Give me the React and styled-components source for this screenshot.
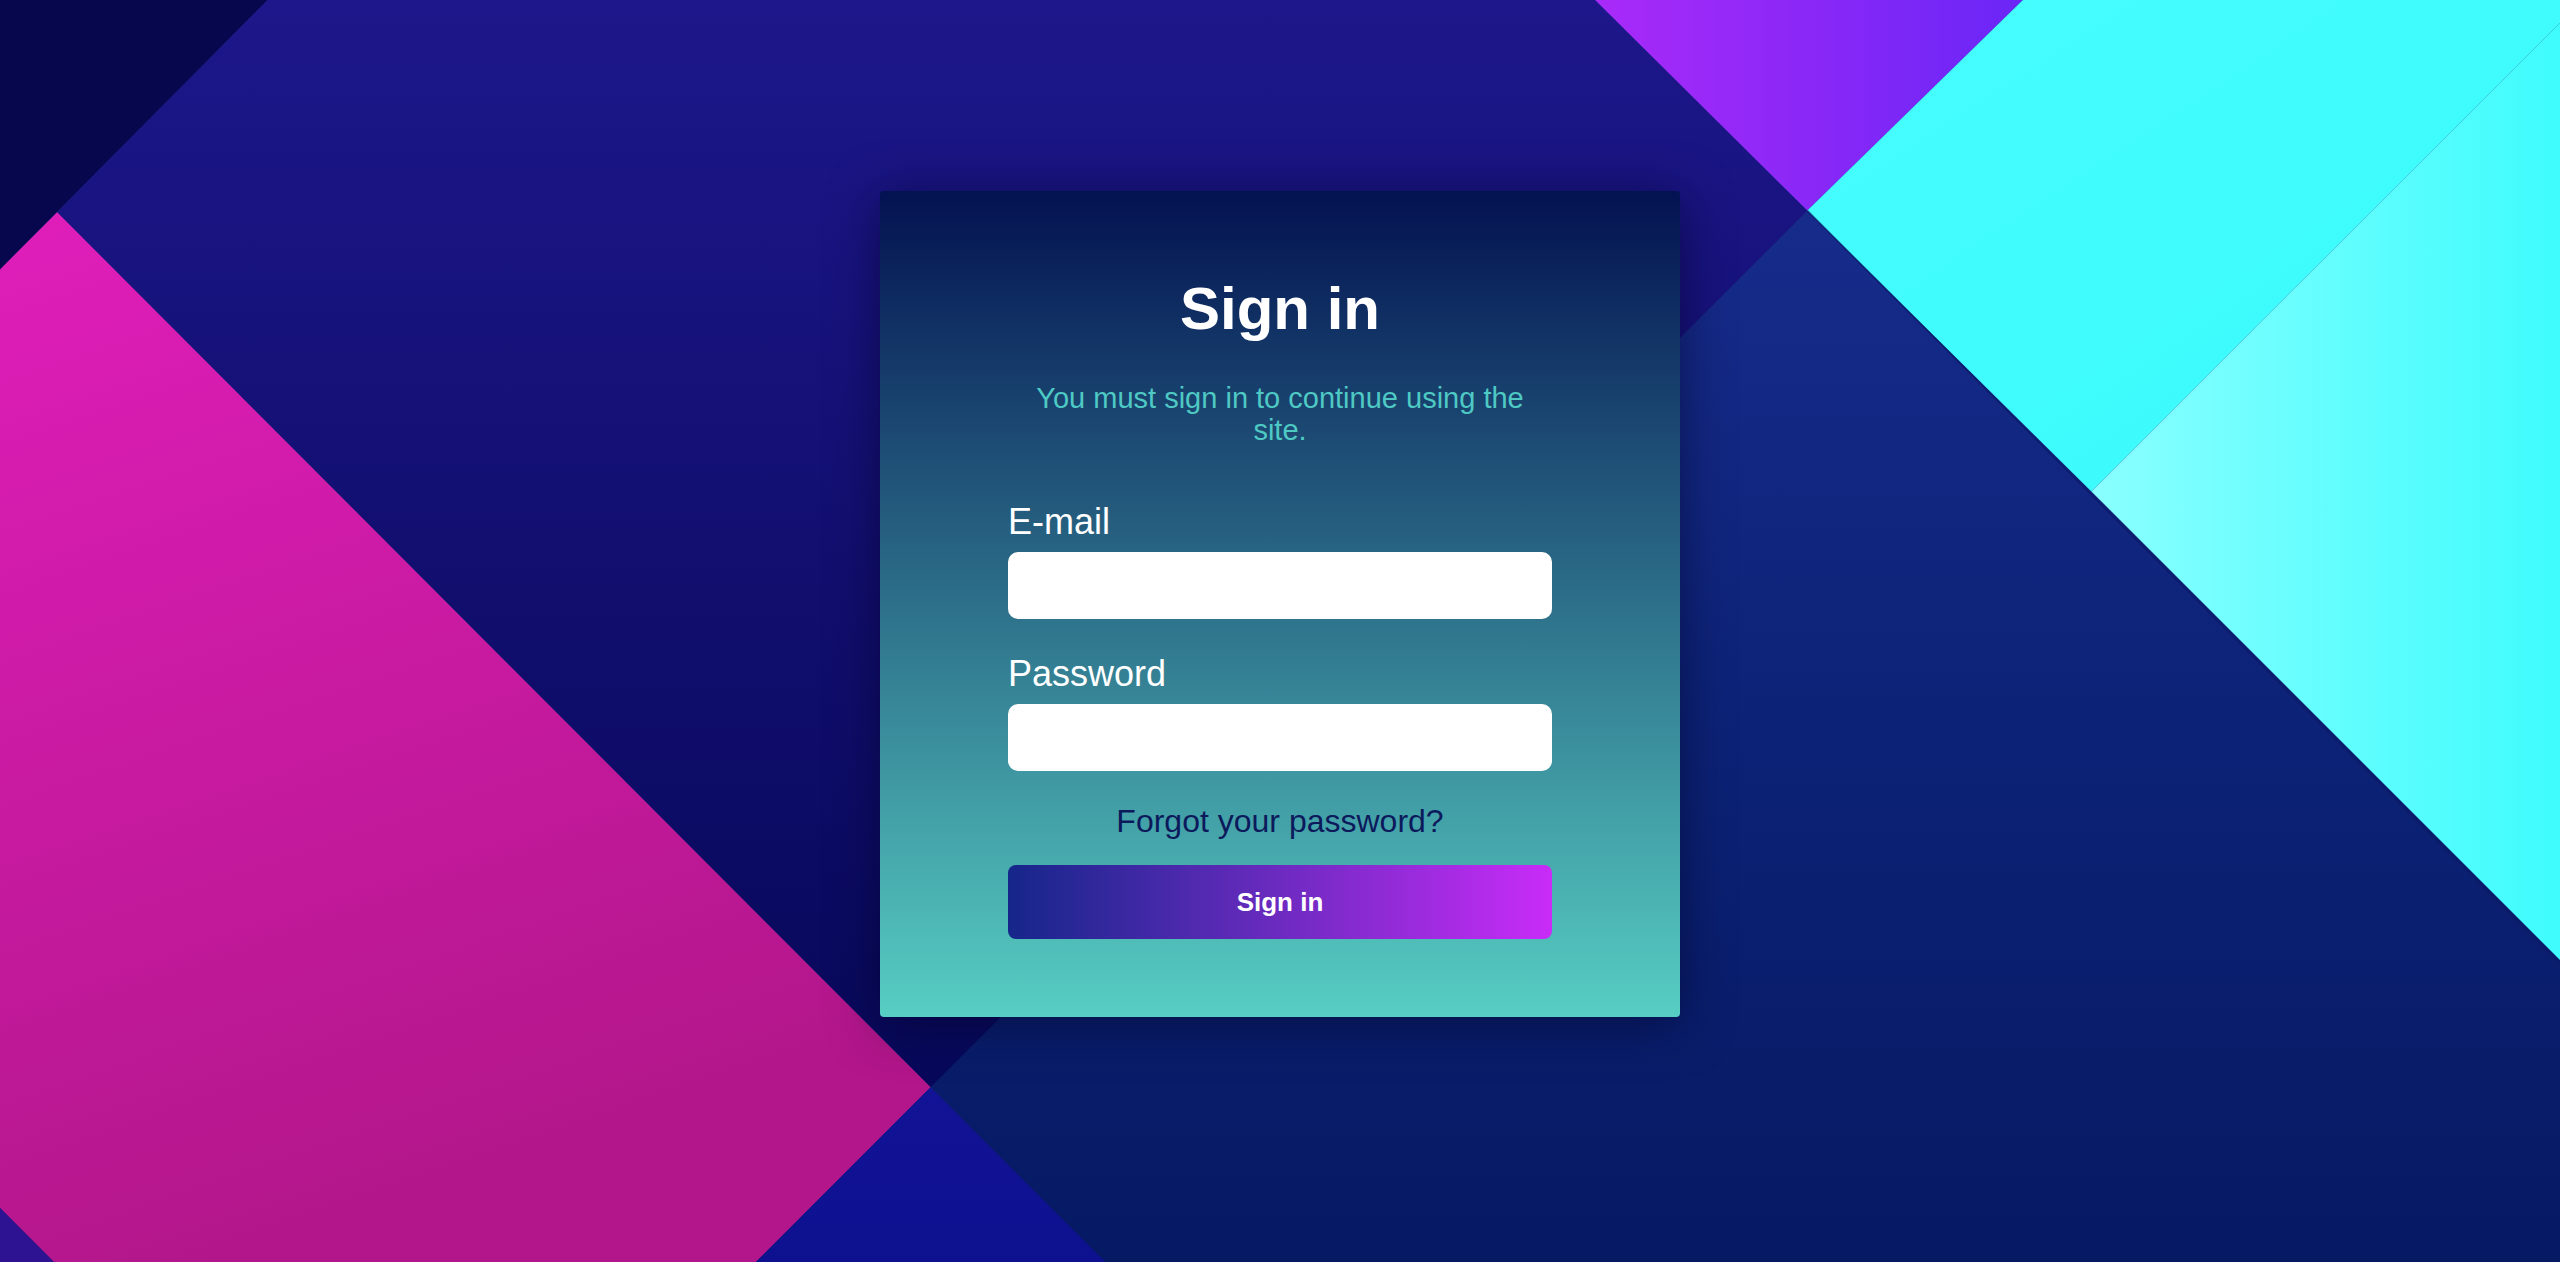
import React from "react";
import styled, { createGlobalStyle } from "styled-components";

const GlobalStyle = createGlobalStyle`
  html, body, #root {
    margin: 0;
    padding: 0;
    height: 100%;
  }
  body {
    font-family: "Liberation Sans", Arial, sans-serif;
    overflow: hidden;
    background: #0a1a66;
  }
  * { box-sizing: border-box; }
`;

const Page = styled.div`
  position: relative;
  min-height: 100vh;
  display: flex;
  justify-content: center;
  align-items: flex-start;
  padding-top: 191px;
`;

const Backdrop = styled.svg`
  position: absolute;
  inset: 0;
  width: 100%;
  height: 100%;
  z-index: 0;
  display: block;
`;

const Card = styled.form`
  position: relative;
  z-index: 1;
  width: 800px;
  height: 826px;
  padding: 82px 128px 0;
  border-radius: 4px;
  background: linear-gradient(180deg, #031251 0%, #57cec3 100%);
  box-shadow: 0 6px 50px rgba(2, 4, 30, 0.5);
  display: flex;
  flex-direction: column;
`;

const Title = styled.h1`
  margin: 0;
  font-size: 60px;
  line-height: 72px;
  font-weight: 700;
  color: #ffffff;
  text-align: center;
`;

const Subtitle = styled.p`
  margin: 37px auto 0;
  max-width: 510px;
  font-size: 29px;
  line-height: 32px;
  color: #4ec9c4;
  text-align: center;
`;

const Field = styled.div`
  display: flex;
  flex-direction: column;
  gap: 8px;
  margin-top: ${(p) => p.$top}px;
`;

const Label = styled.label`
  font-size: 36px;
  line-height: 44px;
  color: #ffffff;
`;

const Input = styled.input`
  width: 100%;
  height: 67px;
  border: none;
  outline: none;
  border-radius: 10px;
  background: #ffffff;
  padding: 0 18px;
  font-size: 26px;
  font-family: "Liberation Sans", Arial, sans-serif;
`;

const Forgot = styled.a`
  display: block;
  margin-top: 32px;
  font-size: 32px;
  line-height: 36px;
  color: #0c1a5c;
  text-align: center;
  text-decoration: none;
  cursor: pointer;
`;

const SubmitButton = styled.button`
  margin-top: 26px;
  width: 100%;
  height: 74px;
  border: none;
  border-radius: 8px;
  background: linear-gradient(90deg, #15268a 0%, #5a2ab5 40%, #c92cf8 100%);
  color: #ffffff;
  font-family: "Liberation Sans", Arial, sans-serif;
  font-weight: 700;
  font-size: 26px;
  cursor: pointer;
`;

function Background() {
  return (
    <Backdrop viewBox="0 0 1568 773" preserveAspectRatio="none" aria-hidden="true">
      <defs>
        <linearGradient id="indigo" x1="0" y1="0" x2="0" y2="1">
          <stop offset="0" stopColor="#1d178b" />
          <stop offset="0.55" stopColor="#110e6e" />
          <stop offset="1" stopColor="#07085a" />
        </linearGradient>
        <linearGradient id="magenta" x1="0" y1="0" x2="0.3" y2="1">
          <stop offset="0" stopColor="#e01eba" />
          <stop offset="1" stopColor="#b2168a" />
        </linearGradient>
        <linearGradient id="navy" x1="0" y1="0" x2="0" y2="1">
          <stop offset="0" stopColor="#172b8b" />
          <stop offset="0.5" stopColor="#0c2276" />
          <stop offset="1" stopColor="#061963" />
        </linearGradient>
        <linearGradient id="violet" x1="0" y1="0" x2="1" y2="0">
          <stop offset="0" stopColor="#a92af8" />
          <stop offset="1" stopColor="#6a26f6" />
        </linearGradient>
        <linearGradient id="cyan" x1="0" y1="0" x2="1" y2="1">
          <stop offset="0" stopColor="#47fdfd" />
          <stop offset="1" stopColor="#38fafc" />
        </linearGradient>
        <linearGradient id="lightcyan" x1="0" y1="0" x2="1" y2="0">
          <stop offset="0" stopColor="#8affff" />
          <stop offset="1" stopColor="#3ffcfd" />
        </linearGradient>
        <linearGradient id="deepblue" x1="0" y1="0" x2="0" y2="1">
          <stop offset="0" stopColor="#121396" />
          <stop offset="1" stopColor="#0d118f" />
        </linearGradient>
      </defs>
      <rect x="0" y="0" width="1568" height="773" fill="url(#navy)" />
      <polygon points="1107,129 1568,590 1568,773 677,773 570,666" fill="url(#navy)" />
      <polygon points="0,0 164,0 0,165" fill="#07074e" />
      <polygon points="164,0 977,0 1107,129 570,666 35,130" fill="url(#indigo)" />
      <polygon points="35,130 570,666 463,773 33,773 0,740 0,165" fill="url(#magenta)" />
      <polygon points="0,740 33,773 0,773" fill="#2d1391" />
      <polygon points="570,666 677,773 463,773" fill="url(#deepblue)" />
      <polygon points="977,0 1239,0 1107,129" fill="url(#violet)" />
      <polygon points="1239,0 1568,0 1568,14 1281,301 1107,129" fill="url(#cyan)" />
      <polygon points="1568,14 1281,301 1568,588" fill="url(#lightcyan)" />
      <line x1="1107" y1="129" x2="1568" y2="590" stroke="#0a1860" strokeOpacity="0.6" strokeWidth="1" />
    </Backdrop>
  );
}

export default function App() {
  return (
    <>
      <GlobalStyle />
      <Page>
        <Background />
        <Card onSubmit={(e) => e.preventDefault()}>
          <Title>Sign in</Title>
          <Subtitle>You must sign in to continue using the site.</Subtitle>
          <Field $top={54}>
            <Label htmlFor="email">E-mail</Label>
            <Input id="email" type="email" />
          </Field>
          <Field $top={33}>
            <Label htmlFor="password">Password</Label>
            <Input id="password" type="password" />
          </Field>
          <Forgot>Forgot your password?</Forgot>
          <SubmitButton type="submit">Sign in</SubmitButton>
        </Card>
      </Page>
    </>
  );
}
